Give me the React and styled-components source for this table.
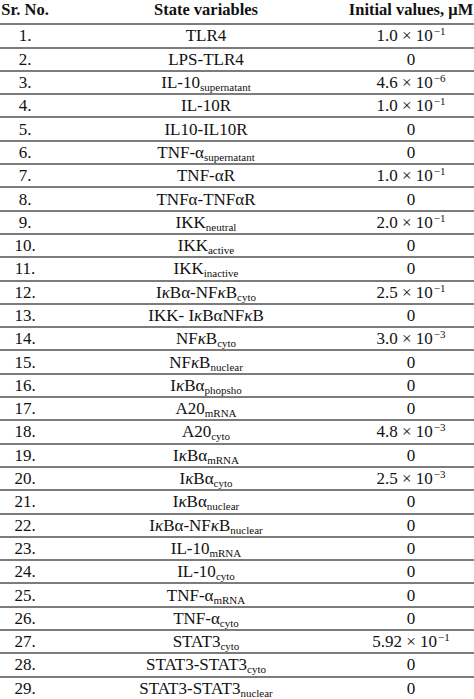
import React from "react";
import styled, { createGlobalStyle } from "styled-components";

const Global = createGlobalStyle`
  html, body { margin: 0; padding: 0; background: #fff; }
  body { font-family: "Liberation Serif", Times, "DejaVu Serif", serif; color: #111; }
`;

const Table = styled.div`
  width: 474px;
  display: flex;
  flex-direction: column;
  overflow: hidden;
  font-family: "Liberation Serif", Times, "DejaVu Serif", serif;
`;

const Row = styled.div`
  display: grid;
  grid-template-columns: 50px 312px 98px;
  height: 23.3px;
  box-sizing: border-box;
  align-items: center;
  border-top: ${(p) => (p.$head ? "none" : "2px solid #7c7c7c")};
  font-size: ${(p) => (p.$head ? "16.5px" : "17px")};
  font-weight: ${(p) => (p.$head ? 700 : 400)};
  line-height: 1;
  padding-bottom: ${(p) => (p.$head ? "2px" : "0")};
`;

const Cell = styled.div`
  text-align: center;
  white-space: nowrap;
  display: flex;
  justify-content: center;
`;

const Sub = styled.span`
  font-size: 11px;
  position: relative;
  top: 3px;
`;

const Sup = styled.span`
  font-size: 11px;
  position: relative;
  top: -6px;
  margin-left: 1px;
`;

const Kappa = styled.span`
  font-style: italic;
`;

const rows = [
  ["TLR4", "", ["1.0", "1"]],
  ["LPS-TLR4", "", null],
  ["IL-10", "supernatant", ["4.6", "6"]],
  ["IL-10R", "", ["1.0", "1"]],
  ["IL10-IL10R", "", null],
  ["TNF-α", "supernatant", null],
  ["TNF-αR", "", ["1.0", "1"]],
  ["TNFα-TNFαR", "", null],
  ["IKK", "neutral", ["2.0", "1"]],
  ["IKK", "active", null],
  ["IKK", "inactive", null],
  ["IκBα-NFκB", "cyto", ["2.5", "1"]],
  ["IKK- IκBαNFκB", "", null],
  ["NFκB", "cyto", ["3.0", "3"]],
  ["NFκB", "nuclear", null],
  ["IκBα", "phopsho", null],
  ["A20", "mRNA", null],
  ["A20", "cyto", ["4.8", "3"]],
  ["IκBα", "mRNA", null],
  ["IκBα", "cyto", ["2.5", "3"]],
  ["IκBα", "nuclear", null],
  ["IκBα-NFκB", "nuclear", null],
  ["IL-10", "mRNA", null],
  ["IL-10", "cyto", null],
  ["TNF-α", "mRNA", null],
  ["TNF-α", "cyto", null],
  ["STAT3", "cyto", ["5.92", "1"]],
  ["STAT3-STAT3", "cyto", null],
  ["STAT3-STAT3", "nuclear", null],
];

function Name({ text, sub }) {
  const parts = text.split("κ");
  return (
    <span>
      {parts.map((p, i) => (
        <React.Fragment key={i}>
          {i > 0 && <Kappa>κ</Kappa>}
          {p}
        </React.Fragment>
      ))}
      {sub && <Sub>{sub}</Sub>}
    </span>
  );
}

function Value({ v }) {
  if (!v) return <span>0</span>;
  return (
    <span>
      {v[0]} × 10<Sup>−{v[1]}</Sup>
    </span>
  );
}

export default function App() {
  return (
    <>
      <Global />
      <Table>
        <Row $head>
          <Cell>Sr. No.</Cell>
          <Cell>State variables</Cell>
          <Cell>Initial values, μM</Cell>
        </Row>
        {rows.map(([name, sub, val], i) => (
          <Row key={i}>
            <Cell>{i + 1}.</Cell>
            <Cell>
              <Name text={name} sub={sub} />
            </Cell>
            <Cell>
              <Value v={val} />
            </Cell>
          </Row>
        ))}
      </Table>
    </>
  );
}
